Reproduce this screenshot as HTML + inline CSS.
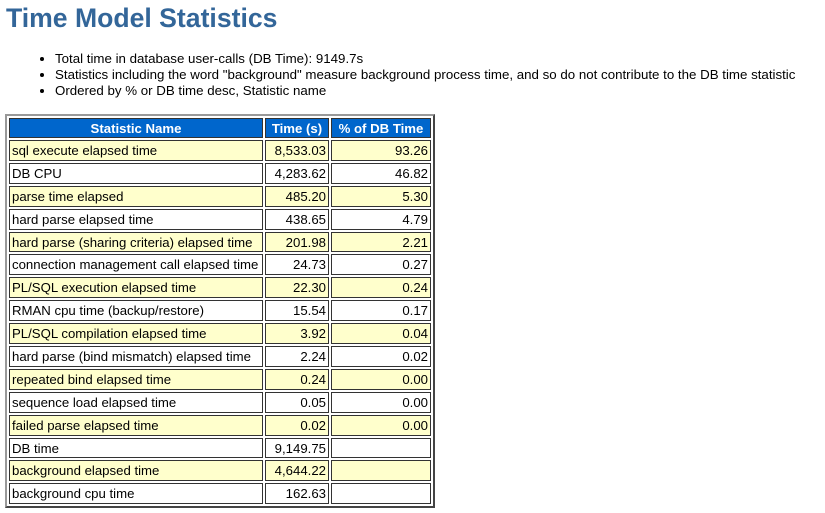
<!DOCTYPE html>
<html><head><meta charset="utf-8"><style>
body{margin:0;background:#fff;font-family:"Liberation Sans",Arial,sans-serif;color:#000;width:825px;height:513px;overflow:hidden;position:relative}
h1{position:absolute;left:6px;top:3px;margin:0;font-size:26.6px;font-weight:bold;color:#336699;letter-spacing:0}
ul{position:absolute;left:0;top:51px;margin:0;padding-left:55px;font-size:13.3px;line-height:16px}
table{position:absolute;left:5px;top:114px;border:2px outset #999;border-spacing:2px;font-size:13.2px}
td,th{border:1px solid #333;padding:0 2px;height:18.9px;line-height:15px;white-space:nowrap}
th{background:#0066cc;color:#fff;font-weight:bold;height:18px}
td.n{text-align:right}
tr.y td{background:#ffffcc}
</style></head><body>
<h1>Time Model Statistics</h1>
<ul>
<li>Total time in database user-calls (DB Time): 9149.7s</li>
<li>Statistics including the word "background" measure background process time, and so do not contribute to the DB time statistic</li>
<li>Ordered by % or DB time desc, Statistic name</li>
</ul>
<table>
<tr><th style="width:248px">Statistic Name</th><th style="width:58px">Time (s)</th><th style="width:94px">% of DB Time</th></tr>
<tr class="y"><td>sql execute elapsed time</td><td class="n">8,533.03</td><td class="n">93.26</td></tr>
<tr><td>DB CPU</td><td class="n">4,283.62</td><td class="n">46.82</td></tr>
<tr class="y"><td>parse time elapsed</td><td class="n">485.20</td><td class="n">5.30</td></tr>
<tr><td>hard parse elapsed time</td><td class="n">438.65</td><td class="n">4.79</td></tr>
<tr class="y"><td>hard parse (sharing criteria) elapsed time</td><td class="n">201.98</td><td class="n">2.21</td></tr>
<tr><td>connection management call elapsed time</td><td class="n">24.73</td><td class="n">0.27</td></tr>
<tr class="y"><td>PL/SQL execution elapsed time</td><td class="n">22.30</td><td class="n">0.24</td></tr>
<tr><td>RMAN cpu time (backup/restore)</td><td class="n">15.54</td><td class="n">0.17</td></tr>
<tr class="y"><td>PL/SQL compilation elapsed time</td><td class="n">3.92</td><td class="n">0.04</td></tr>
<tr><td>hard parse (bind mismatch) elapsed time</td><td class="n">2.24</td><td class="n">0.02</td></tr>
<tr class="y"><td>repeated bind elapsed time</td><td class="n">0.24</td><td class="n">0.00</td></tr>
<tr><td>sequence load elapsed time</td><td class="n">0.05</td><td class="n">0.00</td></tr>
<tr class="y"><td>failed parse elapsed time</td><td class="n">0.02</td><td class="n">0.00</td></tr>
<tr><td>DB time</td><td class="n">9,149.75</td><td class="n"></td></tr>
<tr class="y"><td>background elapsed time</td><td class="n">4,644.22</td><td class="n"></td></tr>
<tr><td>background cpu time</td><td class="n">162.63</td><td class="n"></td></tr>
</table>
</body></html>
